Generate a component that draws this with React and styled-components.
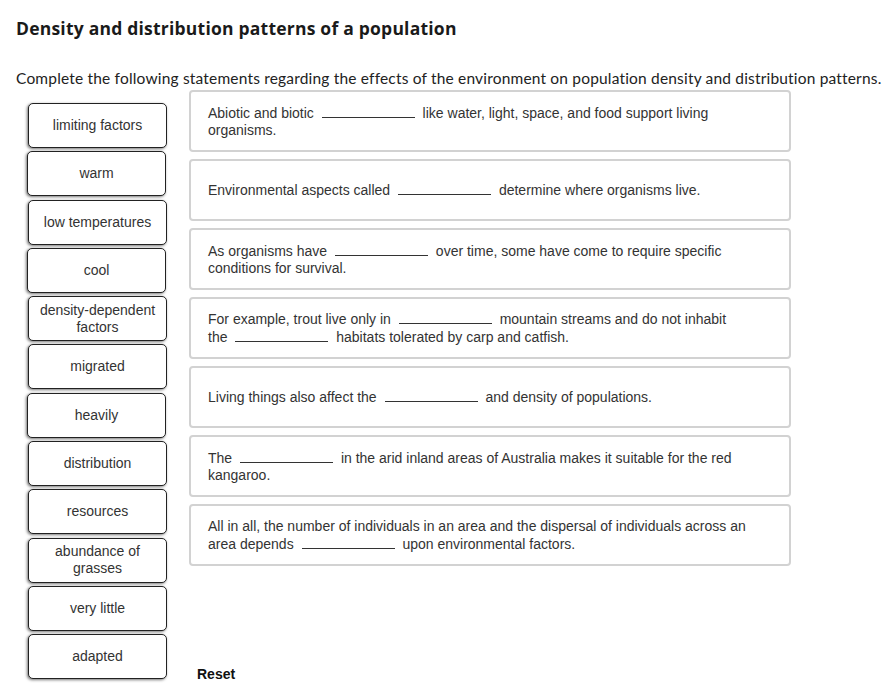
import React from 'react'
import styled, { createGlobalStyle } from 'styled-components'

const GlobalStyle = createGlobalStyle`
  body {
    margin: 0;
    background: #fff;
    font-family: "Liberation Sans", Arial, sans-serif;
  }
`;

const Page = styled.div`
  width: 895px;
  height: 688px;
  padding: 17px 0 0 16px;
  box-sizing: border-box;
  overflow: hidden;
`;

const Title = styled.h1`
  margin: 0;
  font-family: "Open Sans", "Lato", sans-serif;
  font-weight: 700;
  font-size: 17.5px;
  letter-spacing: 0.22px;
  line-height: 22px;
  color: #1a1a1a;
`;

const Intro = styled.p`
  margin: 29px 0 0;
  font-family: "Lato", "Open Sans", sans-serif;
  font-size: 15.5px;
  letter-spacing: 0.18px;
  line-height: 20px;
  color: #222;
  white-space: nowrap;
`;

const Board = styled.div`
  display: flex;
  margin-top: 2px;
  height: 593px;
`;

const Bank = styled.div`
  display: flex;
  flex-direction: column;
  gap: 3.3px;
  width: 173px;
  padding: 13px 0 0 12px;
  box-sizing: border-box;
`;

const Tile = styled.div`
  display: flex;
  align-items: center;
  justify-content: center;
  flex-shrink: 0;
  width: 139px;
  height: 45px;
  box-sizing: border-box;
  margin-left: ${p => p.shift || 0}px;
  padding: 0 6px;
  border: 1px solid #222;
  border-radius: 5px;
  box-shadow: -1px 1px 3px rgba(0, 0, 0, 0.55);
  background: #fff;
  text-align: center;
  font-size: 14px;
  line-height: 17px;
  color: #333;
`;

const Statements = styled.div`
  display: flex;
  flex-direction: column;
  gap: 7px;
  width: 602px;
`;

const Panel = styled.div`
  display: flex;
  align-items: center;
  height: 62px;
  flex-shrink: 0;
  box-sizing: border-box;
  padding: 0 40px 0 17px;
  border: 2px solid #d2d2d2;
  border-radius: 4px;
  font-size: 14px;
  line-height: 17px;
  color: #333;
`;

const Blank = styled.span`
  display: inline-block;
  width: 93px;
  height: 13px;
  margin: 0 4px;
  border-bottom: 1px solid #333;
  vertical-align: baseline;
`;

const ResetButton = styled.button`
  margin-top: auto;
  align-self: flex-start;
  padding: 0 0 0 8px;
  border: none;
  background: none;
  font-family: "Liberation Sans", Arial, sans-serif;
  font-weight: 700;
  font-size: 14px;
  line-height: 17px;
  color: #111;
  cursor: pointer;
`;

const tiles = [
  { label: 'limiting factors' },
  { label: 'warm', shift: -1 },
  { label: 'low temperatures' },
  { label: 'cool', shift: -1 },
  { label: 'density-dependent factors' },
  { label: 'migrated' },
  { label: 'heavily', shift: -1 },
  { label: 'distribution' },
  { label: 'resources' },
  { label: 'abundance of grasses' },
  { label: 'very little' },
  { label: 'adapted' },
]

function App() {
  return (
    <>
      <GlobalStyle />
      <Page>
        <Title>Density and distribution patterns of a population</Title>
        <Intro>
          Complete the following statements regarding the effects of the environment on population density and distribution patterns.
        </Intro>
        <Board>
          <Bank>
            {tiles.map(t => (
              <Tile key={t.label} shift={t.shift}>{t.label}</Tile>
            ))}
          </Bank>
          <Statements>
            <Panel>
              <div>Abiotic and biotic <Blank /> like water, light, space, and food support living organisms.</div>
            </Panel>
            <Panel>
              <div>Environmental aspects called <Blank /> determine where organisms live.</div>
            </Panel>
            <Panel>
              <div>As organisms have <Blank /> over time, some have come to require specific conditions for survival.</div>
            </Panel>
            <Panel>
              <div>For example, trout live only in <Blank /> mountain streams and do not inhabit the <Blank /> habitats tolerated by carp and catfish.</div>
            </Panel>
            <Panel>
              <div>Living things also affect the <Blank /> and density of populations.</div>
            </Panel>
            <Panel>
              <div>The <Blank /> in the arid inland areas of Australia makes it suitable for the red kangaroo.</div>
            </Panel>
            <Panel>
              <div>All in all, the number of individuals in an area and the dispersal of individuals across an area depends <Blank /> upon environmental factors.</div>
            </Panel>
            <ResetButton>Reset</ResetButton>
          </Statements>
        </Board>
      </Page>
    </>
  )
}

export default App
